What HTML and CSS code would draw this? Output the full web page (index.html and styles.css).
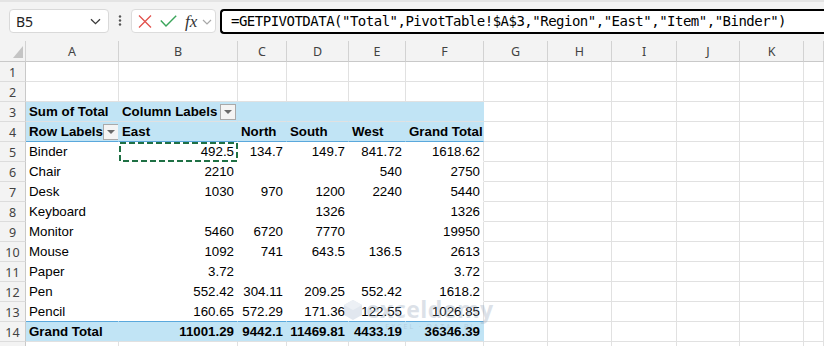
FILE: index.html
```html
<!DOCTYPE html>
<html lang="en">
<head>
  <meta charset="UTF-8">
  <title>GETPIVOTDATA</title>
  <link rel="stylesheet" href="styles.css">
</head>

<body>

  <div class="formula-bar">
    <div class="name-box">
      <span>B5</span>
      <svg width="11" height="7" viewBox="0 0 11 7"><path d="M1 1.2l4.5 4.5 4.5-4.5" fill="none" stroke="#3a3a3a" stroke-width="1.3"/></svg>
    </div>
    <div class="dots">
      <svg width="4" height="12" viewBox="0 0 4 12"><circle cx="2" cy="1.5" r="1.2"/><circle cx="2" cy="5.5" r="1.2"/><circle cx="2" cy="9.5" r="1.2"/></svg>
    </div>
    <div class="fx-box">
      <svg class="ico-x" width="14" height="13" viewBox="0 0 14 13"><path d="M1 0.5l12 12M13 0.5l-12 12" fill="none" stroke="#e2514c" stroke-width="1.3"/></svg>
      <svg class="ico-ok" width="17" height="12" viewBox="0 0 17 12"><path d="M0.8 5.5l5.2 5.5 10.2-10.3" fill="none" stroke="#3aa55a" stroke-width="1.4"/></svg>
      <span class="fx">fx</span>
      <svg class="ico-more" width="10" height="6" viewBox="0 0 10 6"><path d="M1 1l4 4 4-4" fill="none" stroke="#a8a8a8" stroke-width="1.2"/></svg>
    </div>
    <div class="formula-input">=GETPIVOTDATA("Total",PivotTable!$A$3,"Region","East","Item","Binder")</div>
  </div>

  <div class="sheet">
    <table class="grid">
      <colgroup>
        <col class="w-rh"><col class="w-a"><col class="w-b"><col class="w-c"><col class="w-d"><col class="w-e"><col class="w-f">
        <col class="w-g"><col class="w-h"><col class="w-i"><col class="w-j"><col class="w-k"><col class="w-l">
      </colgroup>
      <tr class="ch">
        <th class="corner"><svg width="26" height="19" viewBox="0 0 26 19"><path d="M23 4v12h-10z" fill="#c4c4c4"/></svg></th>
        <th>A</th><th>B</th><th>C</th><th>D</th><th>E</th><th>F</th><th>G</th><th>H</th><th>I</th><th>J</th><th>K</th><th></th>
      </tr>
      <tr><th class="rh">1</th><td></td><td></td><td></td><td></td><td></td><td></td><td></td><td></td><td></td><td></td><td></td><td></td></tr>
      <tr><th class="rh">2</th><td></td><td></td><td></td><td></td><td></td><td></td><td></td><td></td><td></td><td></td><td></td><td></td></tr>
      <tr>
        <th class="rh">3</th>
        <td class="ph b">Sum of Total</td>
        <td class="ph b"><div class="lbl">Column Labels<span class="dd"></span></div></td>
        <td class="ph"></td><td class="ph"></td><td class="ph"></td><td class="ph"></td>
        <td></td><td></td><td></td><td></td><td></td><td></td>
      </tr>
      <tr>
        <th class="rh">4</th>
        <td class="ph line b"><div class="lbl">Row Labels<span class="dd"></span></div></td>
        <td class="ph line b">East</td>
        <td class="ph line b">North</td>
        <td class="ph line b">South</td>
        <td class="ph line b">West</td>
        <td class="ph line b">Grand Total</td>
        <td></td><td></td><td></td><td></td><td></td><td></td>
      </tr>
      <tr>
        <th class="rh">5</th>
        <td class="pb">Binder</td>
        <td class="pb num sel">492.5<svg class="marquee" width="119" height="20" viewBox="0 0 119 20"><rect x="1" y="1" width="117" height="18" fill="none" stroke="#1f7044" stroke-width="2" stroke-dasharray="6 3"/></svg></td>
        <td class="pb num">134.7</td><td class="pb num">149.7</td><td class="pb num">841.72</td><td class="pb num fe">1618.62</td>
        <td></td><td></td><td></td><td></td><td></td><td></td>
      </tr>
      <tr>
        <th class="rh">6</th>
        <td class="pb">Chair</td>
        <td class="pb num">2210</td><td class="pb num"></td><td class="pb num"></td><td class="pb num">540</td><td class="pb num fe">2750</td>
        <td></td><td></td><td></td><td></td><td></td><td></td>
      </tr>
      <tr>
        <th class="rh">7</th>
        <td class="pb">Desk</td>
        <td class="pb num">1030</td><td class="pb num">970</td><td class="pb num">1200</td><td class="pb num">2240</td><td class="pb num fe">5440</td>
        <td></td><td></td><td></td><td></td><td></td><td></td>
      </tr>
      <tr>
        <th class="rh">8</th>
        <td class="pb">Keyboard</td>
        <td class="pb num"></td><td class="pb num"></td><td class="pb num">1326</td><td class="pb num"></td><td class="pb num fe">1326</td>
        <td></td><td></td><td></td><td></td><td></td><td></td>
      </tr>
      <tr>
        <th class="rh">9</th>
        <td class="pb">Monitor</td>
        <td class="pb num">5460</td><td class="pb num">6720</td><td class="pb num">7770</td><td class="pb num"></td><td class="pb num fe">19950</td>
        <td></td><td></td><td></td><td></td><td></td><td></td>
      </tr>
      <tr>
        <th class="rh">10</th>
        <td class="pb">Mouse</td>
        <td class="pb num">1092</td><td class="pb num">741</td><td class="pb num">643.5</td><td class="pb num">136.5</td><td class="pb num fe">2613</td>
        <td></td><td></td><td></td><td></td><td></td><td></td>
      </tr>
      <tr>
        <th class="rh">11</th>
        <td class="pb">Paper</td>
        <td class="pb num">3.72</td><td class="pb num"></td><td class="pb num"></td><td class="pb num"></td><td class="pb num fe">3.72</td>
        <td></td><td></td><td></td><td></td><td></td><td></td>
      </tr>
      <tr>
        <th class="rh">12</th>
        <td class="pb">Pen</td>
        <td class="pb num">552.42</td><td class="pb num">304.11</td><td class="pb num">209.25</td><td class="pb num">552.42</td><td class="pb num fe">1618.2</td>
        <td></td><td></td><td></td><td></td><td></td><td></td>
      </tr>
      <tr>
        <th class="rh">13</th>
        <td class="pb line">Pencil</td>
        <td class="pb line num">160.65</td><td class="pb line num">572.29</td><td class="pb line num">171.36</td><td class="pb line num">122.55</td><td class="pb line num fe">1026.85</td>
        <td></td><td></td><td></td><td></td><td></td><td></td>
      </tr>
      <tr>
        <th class="rh">14</th>
        <td class="ph b">Grand Total</td>
        <td class="ph b num">11001.29</td><td class="ph b num">9442.1</td><td class="ph b num">11469.81</td><td class="ph b num">4433.19</td><td class="ph b num">36346.39</td>
        <td></td><td></td><td></td><td></td><td></td><td></td>
      </tr>
      <tr><th class="rh">15</th><td></td><td></td><td></td><td></td><td></td><td></td><td></td><td></td><td></td><td></td><td></td><td></td></tr>
    </table>

    <div class="watermark">
      <svg width="22" height="22" viewBox="0 0 22 22"><path d="M11 1l9 5v10l-9 5-9-5V6z" fill="#9fb3cc"/><path d="M11 1l9 5-9 5-9-5z" fill="#c3d0e0"/></svg>
      <div class="wm-text">
        <span class="wm-name">exceldemy</span>
        <span class="wm-sub">EXCEL · DATA · BI</span>
      </div>
    </div>
  </div>

</body>
</html>
```

FILE: styles.css
```css
body {
  margin: 0;
  background: #fff;
  font-family: 'Liberation Sans', Arial, sans-serif;
  overflow: hidden;
}
.formula-bar {
  display: flex;
  align-items: flex-start;
  height: 41px;
  box-sizing: border-box;
  padding: 7px 0 0 9px;
  background: #f3f3f3;
  border-top: 2px solid #e4e4e4;
}
.name-box {
  width: 100px;
  height: 24px;
  box-sizing: border-box;
  display: flex;
  align-items: center;
  justify-content: space-between;
  padding: 0 7px 0 6px;
  background: #fff;
  border: 1px solid #d9d9d9;
  border-radius: 4px;
  font: 14px 'Noto Sans', sans-serif;
  color: #222;
}
.dots {
  width: 22px;
  height: 24px;
  display: flex;
  align-items: center;
  justify-content: center;
  fill: #555;
}
.fx-box {
  width: 85px;
  height: 24px;
  box-sizing: border-box;
  display: flex;
  align-items: center;
  padding-left: 6px;
  margin-right: 4px;
  background: #fff;
  border: 1px solid #dcdcdc;
  border-radius: 4px;
}
.ico-ok {
  margin-left: 8px;
}
.fx {
  margin-left: 8px;
  font: italic 17px 'Liberation Serif', serif;
  color: #333;
  line-height: 1;
}
.ico-more {
  margin-left: 5px;
  margin-top: 2px;
}
.formula-input {
  flex: 1;
  height: 25px;
  box-sizing: border-box;
  padding-left: 9px;
  background: #fff;
  border: 2px solid #000;
  border-right: none;
  border-radius: 4px 0 0 4px;
  font: 14px 'DejaVu Sans Mono', monospace;
  letter-spacing: -0.5px;
  line-height: 21px;
  color: #000;
  white-space: nowrap;
  overflow: hidden;
}

.sheet {
  position: relative;
}
.grid {
  table-layout: fixed;
  width: 824px;
  border-collapse: separate;
  border-spacing: 0;
  font-size: 13.3px;
  color: #000;
}
.w-rh { width: 26px; }
.w-a { width: 93px; }
.w-b { width: 119px; }
.w-c { width: 49px; }
.w-d { width: 62px; }
.w-e { width: 57px; }
.w-f { width: 78px; }
.w-g, .w-h, .w-k { width: 64px; }
.w-i { width: 65px; }
.w-j { width: 63px; }
.w-l { width: 20px; }

.grid tr {
  height: 20px;
}
.grid td {
  padding: 0 3px 1px 3px;
  border-right: 1px solid #e1e1e1;
  border-bottom: 1px solid #e1e1e1;
  vertical-align: bottom;
  line-height: 17px;
  white-space: nowrap;
  overflow: hidden;
}
.grid th {
  padding: 0;
  font: 12.5px 'Noto Sans', sans-serif;
  color: #424242;
  font-weight: normal;
  background: #f3f3f3;
}
.ch th {
  border-right: 1px solid #d2d2d2;
  border-bottom: 1px solid #c9c9c9;
  text-align: center;
  line-height: 19px;
  padding-top: 1px;
}
.ch .corner {
  vertical-align: bottom;
  line-height: 0;
  padding-top: 0;
}
.rh {
  border-right: 1px solid #c9c9c9;
  border-bottom: 1px solid #dcdcdc;
  text-align: center;
  line-height: 18px;
  padding-top: 2px !important;
  vertical-align: top;
}

.b {
  font-weight: bold;
}
.num {
  text-align: right;
}
.ph {
  background: #c1e4f5;
  border-right-color: #c1e4f5 !important;
}
.pb {
  background: #fff;
  border-right-color: #fff !important;
  border-bottom-color: #fff !important;
}
.pb.fe {
  border-right-color: #e1e1e1 !important;
}
.ph.line, .pb.line {
  border-bottom-color: #5aa8dc !important;
}
.lbl {
  display: flex;
  align-items: center;
  justify-content: space-between;
}
.dd {
  flex-shrink: 0;
  width: 14px;
  height: 14px;
  margin-right: -2px;
  border: 1px solid #a9a9a9;
  background: #f4f4f4;
  position: relative;
}
.dd::after {
  content: "";
  position: absolute;
  left: 3px;
  top: 5px;
  border-left: 4px solid transparent;
  border-right: 4px solid transparent;
  border-top: 4px solid #6b6b6b;
}
.sel {
  position: relative;
  overflow: visible !important;
}
.marquee {
  position: absolute;
  left: 0;
  top: 0;
}

.watermark {
  position: absolute;
  left: 342px;
  top: 258px;
  display: flex;
  align-items: flex-start;
  gap: 2px;
  opacity: 0.3;
  pointer-events: none;
}
.wm-text {
  display: flex;
  flex-direction: column;
  align-items: center;
}
.wm-name {
  font: bold 23px 'Open Sans', sans-serif;
  color: #8d9fb6;
  line-height: 20px;
  letter-spacing: 0.5px;
}
.wm-sub {
  font: 7px 'Open Sans', sans-serif;
  color: #8d9fb6;
  letter-spacing: 2px;
  margin-top: 3px;
}
```
